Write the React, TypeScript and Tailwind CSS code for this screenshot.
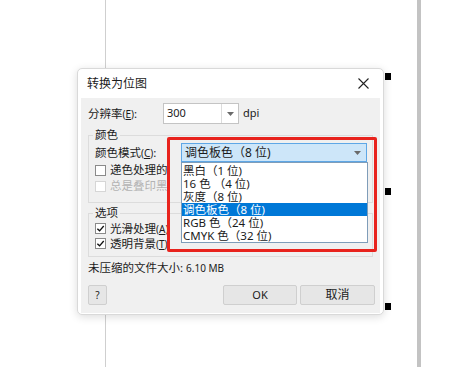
import React from "react";

const listItems = [
  { label: "黑白（1 位)", selected: false },
  { label: "16 色 （4 位)", selected: false },
  { label: "灰度（8 位)", selected: false },
  { label: "调色板色（8 位)", selected: true },
  { label: "RGB 色（24 位)", selected: false },
  { label: "CMYK 色（32 位)", selected: false },
];

function Mnemonic({ letter }: { letter: string }) {
  return (
    <span className="text-[10px]">
      (<span className="underline">{letter}</span>)
    </span>
  );
}

function CheckBox({ checked, disabled }: { checked?: boolean; disabled?: boolean }) {
  return (
    <span
      className={`flex h-[11px] w-[11px] shrink-0 items-center justify-center border bg-white ${
        disabled ? "border-[#d6d6d6]" : "border-[#8a8a8a]"
      }`}
    >
      {checked ? (
        <svg width="9" height="9" viewBox="0 0 10 10">
          <path d="M1.5 5.2 L4 7.6 L8.6 2.2" fill="none" stroke="#111" strokeWidth="1.5" />
        </svg>
      ) : null}
    </span>
  );
}

function SmallArrow() {
  return (
    <svg width="7" height="4" viewBox="0 0 7 4">
      <path d="M0 0 H7 L3.5 4 Z" fill="#6a6a6a" />
    </svg>
  );
}

export default function App() {
  return (
    <div className="relative h-[367px] w-[474px] overflow-hidden bg-white font-['Noto_Sans','Noto_Sans_CJK_SC',sans-serif] text-[11.5px] text-[#1b1b1b]">
      {/* canvas behind the dialog */}
      <div className="absolute left-[105px] top-0 h-full w-px bg-[#cfcfcf]" />
      <div className="absolute left-[417px] top-0 h-full w-[4px] bg-[#c3c3c3]" />
      <div className="absolute left-[385px] top-[73px] h-[7px] w-[6px] bg-black" />
      <div className="absolute left-[385px] top-[188px] h-[7px] w-[6px] bg-black" />
      <div className="absolute left-[385px] top-[303px] h-[7px] w-[6px] bg-black" />

      <div className="relative ml-[77px] mt-[68px] flex h-[247px] w-[307px] flex-col rounded-[5px] border border-[#d9d9d9] bg-white shadow-[0_2px_8px_rgba(0,0,0,0.14)]">
        <div className="flex h-[29px] items-center justify-between pl-[9px] pr-[14px]">
          <span className="text-[12px]">转换为位图</span>
          <svg width="11" height="11" viewBox="0 0 11 11">
            <path d="M0.5 0.5 L10.5 10.5 M10.5 0.5 L0.5 10.5" stroke="#222" strokeWidth="1.1" />
          </svg>
        </div>

        <div className="mx-[3px] mb-[1px] flex flex-1 flex-col bg-[#f0f0f0] pl-[7px] pr-[5px] pt-[5px]">
          {/* resolution row */}
          <div className="flex h-[21px] items-center">
            <span className="w-[75px]">
              分辨率<Mnemonic letter="E" />:
            </span>
            <div className="flex h-[21px] w-[76px] items-center border border-[#c4c4c4] bg-white">
              <span className="flex-1 pl-[3px] text-[11px]">300</span>
              <span className="flex h-full w-[17px] items-center justify-center border-l border-[#dcdcdc]">
                <SmallArrow />
              </span>
            </div>
            <span className="ml-[4px] text-[11px]">dpi</span>
          </div>

          {/* colour group */}
          <div className="relative mr-[2px] mt-[11px] h-[68px] border border-[#dcdcdc] pl-[6px] pt-[7px]">
            <span className="absolute -top-[9px] left-[4px] bg-[#f0f0f0] px-[2px] leading-[16px]">颜色</span>
            <div className="flex h-[19px] items-center">
              <span className="w-[86px]">
                颜色模式<Mnemonic letter="C" />:
              </span>
              <div className="flex h-[19px] w-[186px] items-center justify-between border border-[#5ea7e6] bg-[#cde6f9] pl-[3px] pr-[5px]">
                <span className="text-[12px]">调色板色（8 位)</span>
                <SmallArrow />
              </div>
            </div>
            <div className="flex h-[16px] items-center gap-[4px]">
              <CheckBox />
              <span className="w-[59px] overflow-hidden whitespace-nowrap">
                递色处理的<Mnemonic letter="D" />
              </span>
            </div>
            <div className="flex h-[16px] items-center gap-[4px] text-[#b3b3b3]">
              <CheckBox disabled />
              <span className="w-[59px] overflow-hidden whitespace-nowrap">总是叠印黑色</span>
            </div>
          </div>

          {/* options group */}
          <div className="relative mr-[2px] mt-[10px] h-[44px] border border-[#dcdcdc] pl-[6px] pt-[7px]">
            <span className="absolute -top-[9px] left-[4px] bg-[#f0f0f0] px-[2px] leading-[16px]">选项</span>
            <div className="flex h-[15px] items-center gap-[4px]">
              <CheckBox checked />
              <span className="w-[59px] overflow-hidden whitespace-nowrap">
                光滑处理<Mnemonic letter="A" />
              </span>
            </div>
            <div className="flex h-[15px] items-center gap-[4px]">
              <CheckBox checked />
              <span className="w-[59px] overflow-hidden whitespace-nowrap">
                透明背景<Mnemonic letter="T" />
              </span>
            </div>
          </div>

          <div className="mt-[3px] flex h-[16px] items-center">
            未压缩的文件大小: <span className="ml-[3px] text-[10px]">6.10 MB</span>
          </div>

          <div className="mt-[9px] flex h-[20px] items-center">
            <button
              className="flex h-[20px] w-[19px] items-center justify-center rounded-[2px] border border-[#cfcfcf] bg-[#e6e6e6] text-[10px]"
              type="button"
            >
              ?
            </button>
            <button
              className="ml-auto flex h-[20px] w-[74px] items-center justify-center rounded-[2px] border border-[#cfcfcf] bg-[#e6e6e6] text-[11px]"
              type="button"
            >
              OK
            </button>
            <button
              className="ml-[3px] flex h-[20px] w-[75px] items-center justify-center rounded-[2px] border border-[#cfcfcf] bg-[#e6e6e6] text-[12px]"
              type="button"
            >
              取消
            </button>
          </div>
        </div>
      </div>

      {/* open dropdown list */}
      <div className="absolute left-[181px] top-[162px] h-[81px] w-[187px] border border-[#7f9db9] bg-white pt-px">
        {listItems.map((item) => (
          <div
            className={`h-[13px] whitespace-nowrap pl-[1px] text-[11.5px] leading-[13px] ${
              item.selected ? "bg-[#0078d7] text-white" : ""
            }`}
            key={item.label}
          >
            {item.label}
          </div>
        ))}
      </div>

      {/* red highlight */}
      <div className="absolute left-[167px] top-[137px] h-[115px] w-[210px] rounded-[2px] border-[3px] border-[#e8231d]" />
    </div>
  );
}
